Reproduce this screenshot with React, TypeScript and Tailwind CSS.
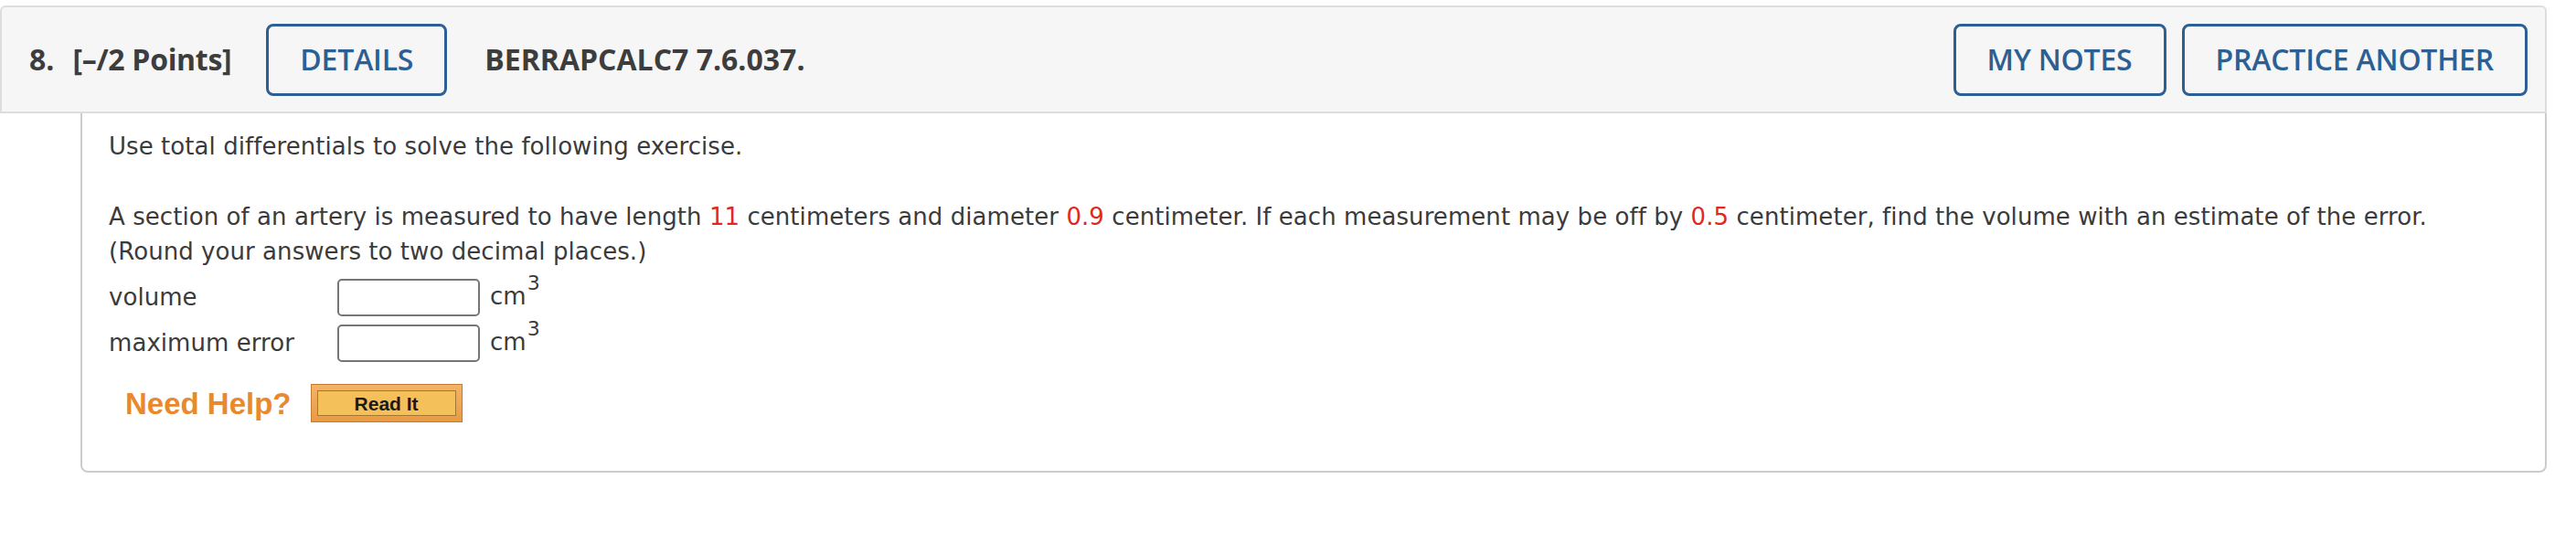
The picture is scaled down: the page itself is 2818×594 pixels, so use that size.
import React from 'react';

const red = 'text-[#e4261c]';

function OutlineButton({ label }: { label: string }) {
  return (
    <button
      type="button"
      className="h-[79px] px-[34px] border-[3px] border-[#2c5f94] rounded-[8px] text-[32px] font-semibold text-[#2c5f94] leading-none tracking-[-0.2px]"
    >
      {label}
    </button>
  );
}

function AnswerRow({ label }: { label: string }) {
  return (
    <div className="flex items-center h-[50px]">
      <div className="w-[250px] leading-[38px]">{label}</div>
      <input
        type="text"
        className="w-[156px] h-[41px] border-2 border-[#767676] rounded-[5px] bg-white"
      />
      <span className="ml-[11px] leading-[38px]">
        cm<span className="text-[22px] relative top-[-16px] ml-[1px]">3</span>
      </span>
    </div>
  );
}

export default function App() {
  return (
    <div className="w-[2818px] h-[594px] bg-white pt-[6px]">
      {/* question header */}
      <div className="w-[2786px] h-[118px] flex items-center bg-[#f6f6f6] border-2 border-[#dddddd] rounded-t-[6px] pl-[30px] pr-[19px] font-['Open_Sans',sans-serif]">
        <span className="text-[32px] font-bold text-[#3d3d3d]">8.</span>
        <span className="ml-[20px] text-[32px] font-bold text-[#3d3d3d] tracking-[-0.3px]">[–/2 Points]</span>
        <div className="ml-[38px]">
          <OutlineButton label="DETAILS" />
        </div>
        <span className="ml-[41px] text-[32px] font-bold text-[#3d3d3d]">BERRAPCALC7 7.6.037.</span>
        <div className="ml-auto flex gap-[17px]">
          <OutlineButton label="MY NOTES" />
          <OutlineButton label="PRACTICE ANOTHER" />
        </div>
      </div>

      {/* question body */}
      <div className="ml-[88px] w-[2698px] h-[393px] border-2 border-t-0 border-[#cccccc] rounded-b-[8px] pt-[17px] pl-[29px] font-['DejaVu_Sans',Verdana,sans-serif] text-[26px] tracking-[0.06px] text-[#3b3b3b]">
        <p className="leading-[38px] mb-[39px]">Use total differentials to solve the following exercise.</p>
        <p className="leading-[38px]">
          A section of an artery is measured to have length <span className={red}>11</span> centimeters and diameter{' '}
          <span className={red}>0.9</span> centimeter. If each measurement may be off by <span className={red}>0.5</span>{' '}
          centimeter, find the volume with an estimate of the error.
        </p>
        <p className="leading-[38px]">(Round your answers to two decimal places.)</p>

        <div className="mt-[6px]">
          <AnswerRow label="volume" />
          <AnswerRow label="maximum error" />
        </div>

        <div className="mt-[20px] ml-[18px] flex items-center">
          <span className="font-['Liberation_Sans',Arial,sans-serif] font-bold text-[33px] leading-none tracking-normal text-[#e8892e]">
            Need Help?
          </span>
          <button
            type="button"
            className="ml-[21px] w-[166px] h-[42px] p-[6px] border border-[#c47a34] bg-gradient-to-b from-[#f3b466] to-[#e99a43]"
          >
            <div className="w-full h-full flex items-center justify-center border border-[#a6772f] bg-[#f3c05a] font-['Liberation_Sans',Arial,sans-serif] font-bold text-[21px] leading-none tracking-normal text-[#1a1a1a]">
              Read It
            </div>
          </button>
        </div>
      </div>
    </div>
  );
}
